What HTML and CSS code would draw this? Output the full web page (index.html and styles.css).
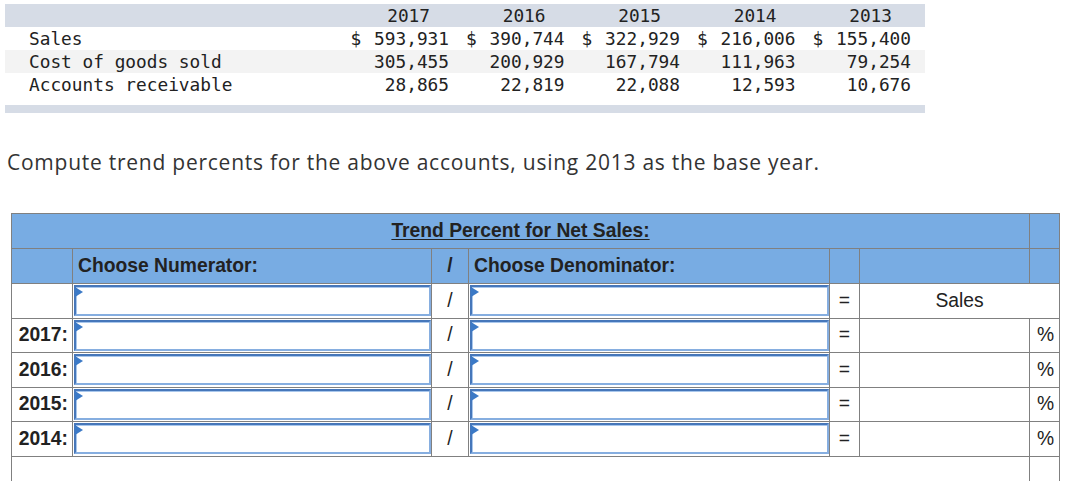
FILE: index.html
```html
<!DOCTYPE html>
<html lang="en">
<head>
<meta charset="utf-8">
<title>Trend Percents</title>
<link rel="stylesheet" href="styles.css">
</head>
<body>
<div class="page">
  <div class="data">
    <div class="drow head">
      <div class="lbl"></div>
      <div class="yr">2017</div><div class="yr">2016</div><div class="yr">2015</div><div class="yr">2014</div><div class="yr">2013</div>
    </div>
    <div class="drow">
      <div class="lbl">Sales</div>
      <div class="num"><span>$</span><span>593,931</span></div>
      <div class="num"><span>$</span><span>390,744</span></div>
      <div class="num"><span>$</span><span>322,929</span></div>
      <div class="num"><span>$</span><span>216,006</span></div>
      <div class="num"><span>$</span><span>155,400</span></div>
    </div>
    <div class="drow alt">
      <div class="lbl">Cost of goods sold</div>
      <div class="num"><span></span><span>305,455</span></div>
      <div class="num"><span></span><span>200,929</span></div>
      <div class="num"><span></span><span>167,794</span></div>
      <div class="num"><span></span><span>111,963</span></div>
      <div class="num"><span></span><span>79,254</span></div>
    </div>
    <div class="drow">
      <div class="lbl">Accounts receivable</div>
      <div class="num"><span></span><span>28,865</span></div>
      <div class="num"><span></span><span>22,819</span></div>
      <div class="num"><span></span><span>22,088</span></div>
      <div class="num"><span></span><span>12,593</span></div>
      <div class="num"><span></span><span>10,676</span></div>
    </div>
    <div class="dfoot"></div>
  </div>

  <p class="prompt">Compute trend percents for the above accounts, using 2013 as the base year.</p>

  <table class="trend">
    <colgroup>
      <col class="c-lbl"><col class="c-num"><col class="c-sl"><col class="c-den"><col class="c-eq"><col class="c-res"><col class="c-pct">
    </colgroup>
    <tr class="hd">
      <td colspan="6" class="title"><span>Trend Percent for Net Sales:</span></td>
      <td></td>
    </tr>
    <tr class="hd">
      <td></td>
      <td class="hlabel">Choose Numerator:</td>
      <td class="sl bold">/</td>
      <td class="hlabel">Choose Denominator:</td>
      <td></td>
      <td></td>
      <td></td>
    </tr>
    <tr class="row">
      <td></td>
      <td class="in"><div class="box"></div></td>
      <td class="sl">/</td>
      <td class="in"><div class="box"></div></td>
      <td class="eq">=</td>
      <td colspan="2" class="sales">Sales</td>
    </tr>
    <tr class="row">
      <td class="yl">2017:</td>
      <td class="in"><div class="box"></div></td>
      <td class="sl">/</td>
      <td class="in"><div class="box"></div></td>
      <td class="eq">=</td>
      <td></td>
      <td class="pct">%</td>
    </tr>
    <tr class="row">
      <td class="yl">2016:</td>
      <td class="in"><div class="box"></div></td>
      <td class="sl">/</td>
      <td class="in"><div class="box"></div></td>
      <td class="eq">=</td>
      <td></td>
      <td class="pct">%</td>
    </tr>
    <tr class="row">
      <td class="yl">2015:</td>
      <td class="in"><div class="box"></div></td>
      <td class="sl">/</td>
      <td class="in"><div class="box"></div></td>
      <td class="eq">=</td>
      <td></td>
      <td class="pct">%</td>
    </tr>
    <tr class="row">
      <td class="yl">2014:</td>
      <td class="in"><div class="box"></div></td>
      <td class="sl">/</td>
      <td class="in"><div class="box"></div></td>
      <td class="eq">=</td>
      <td></td>
      <td class="pct">%</td>
    </tr>
    <tr class="last">
      <td colspan="6"></td>
      <td></td>
    </tr>
  </table>
</div>
</body>
</html>
```
FILE: styles.css
```css
html, body {
  margin: 0;
  padding: 0;
  background: #ffffff;
}

.page {
  padding-top: 4px;
}

/* ---------- data table ---------- */
.data {
  margin-left: 5px;
  width: 920px;
  font-family: "DejaVu Sans Mono", "Liberation Mono", monospace;
  font-size: 17.8px;
  color: #222;
}

.drow {
  display: grid;
  grid-template-columns: 342.5px repeat(5, 115.5px);
  height: 23px;
  line-height: 23px;
}

.drow.head {
  background: #d6dce6;
}

.drow.alt {
  background: #f3f3f3;
}

.lbl {
  padding-left: 24px;
  white-space: nowrap;
}

.yr {
  text-align: right;
  padding-right: 33px;
}

.num {
  display: flex;
  justify-content: space-between;
  padding-left: 3px;
  padding-right: 14px;
  white-space: nowrap;
}

.dfoot {
  margin-top: 9px;
  height: 8px;
  background: #d6dce6;
}

/* ---------- prompt ---------- */
.prompt {
  margin: 37px 0 0 7px;
  font-family: "Open Sans", "Lato", sans-serif;
  font-size: 21px;
  letter-spacing: 0.75px;
  line-height: 24px;
  color: #333;
}

/* ---------- trend table ---------- */
.trend {
  margin: 39px 0 0 11px;
  border-collapse: collapse;
  table-layout: fixed;
  width: 1049px;
  font-family: "Liberation Sans", Arial, sans-serif;
  font-size: 19.3px;
  color: #222;
}

.c-lbl { width: 61px; }
.c-num { width: 359px; }
.c-sl  { width: 37px; }
.c-den { width: 361px; }
.c-eq  { width: 30px; }
.c-res { width: 170px; }
.c-pct { width: 30px; }

.trend td {
  border: 1px solid #808080;
  padding: 0;
  vertical-align: middle;
}

.trend .hd {
  height: 35px;
}

.trend .hd td {
  background: #78ace3;
}

.title {
  text-align: center;
  font-weight: bold;
}

.title span {
  text-decoration: underline;
  text-underline-offset: 2px;
}

.trend td.hlabel {
  font-weight: bold;
  padding-left: 5px;
  white-space: nowrap;
}

.sl {
  text-align: center;
}

.bold {
  font-weight: bold;
}

.trend .row {
  height: 34.5px;
}

.trend td.yl {
  font-weight: bold;
  text-align: right;
  padding-right: 4px;
}

.eq {
  text-align: center;
}

.sales {
  text-align: center;
}

.trend td.pct {
  text-align: right;
  padding-right: 5px;
}

.trend td.in {
  padding: 1px 0 1px 1px;
  vertical-align: top;
}

.box {
  position: relative;
  box-sizing: border-box;
  height: 31px;
  background: #fff;
  border-top: 2px solid #4677ba;
  border-left: 2px solid #4677ba;
  border-right: 2px solid #86aee0;
  border-bottom: 2px solid #86aee0;
  box-shadow: inset 1px 1px 0 #a9c7ec;
}

.box::before {
  content: "";
  position: absolute;
  left: -1px;
  top: 0;
  width: 0;
  height: 0;
  border-left: 8px solid #3b79c6;
  border-top: 5px solid transparent;
  border-bottom: 5px solid transparent;
}

.trend .last {
  height: 40px;
}
```
